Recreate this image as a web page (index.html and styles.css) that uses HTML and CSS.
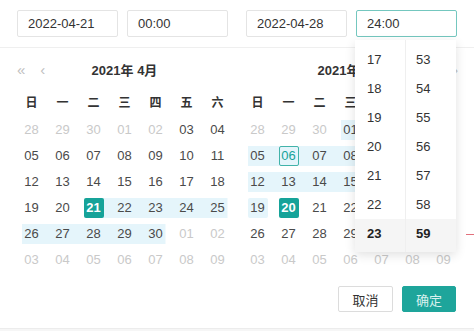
FILE: index.html
```html
<!DOCTYPE html>
<html lang="zh-CN">
<head>
    <meta charset="UTF-8">
    <meta name="viewport" content="width=device-width, initial-scale=1.0">
    <title>日期时间范围选择</title>
    <link rel="stylesheet" href="styles.css">
</head>
<body>

    <div class="picker">
        <div class="inputs">
            <div class="group">
                <div class="field">2022-04-21</div>
                <div class="field">00:00</div>
            </div>
            <div class="group">
                <div class="field">2022-04-28</div>
                <div class="field active">24:00</div>
            </div>
        </div>

        <div class="panels">
            <!-- left month -->
            <div class="panel">
                <div class="head">
                    <div class="arrows"><span>&laquo;</span><span>&lsaquo;</span></div>
                    <div class="title">2021年 4月</div>
                    <div></div>
                </div>
                <div class="grid">
                    <div class="wk">日</div><div class="wk">一</div><div class="wk">二</div><div class="wk">三</div><div class="wk">四</div><div class="wk">五</div><div class="wk">六</div>

                    <div class="d g"><span>28</span></div><div class="d g"><span>29</span></div><div class="d g"><span>30</span></div><div class="d g"><span>01</span></div><div class="d g"><span>02</span></div><div class="d"><span>03</span></div><div class="d"><span>04</span></div>

                    <div class="d"><span>05</span></div><div class="d"><span>06</span></div><div class="d"><span>07</span></div><div class="d"><span>08</span></div><div class="d"><span>09</span></div><div class="d"><span>10</span></div><div class="d"><span>11</span></div>

                    <div class="d"><span>12</span></div><div class="d"><span>13</span></div><div class="d"><span>14</span></div><div class="d"><span>15</span></div><div class="d"><span>16</span></div><div class="d"><span>17</span></div><div class="d"><span>18</span></div>

                    <div class="d"><span>19</span></div><div class="d"><span>20</span></div><div class="d s ss"><span>21</span></div><div class="d r"><span>22</span></div><div class="d r"><span>23</span></div><div class="d r"><span>24</span></div><div class="d r re"><span>25</span></div>

                    <div class="d r rs"><span>26</span></div><div class="d r"><span>27</span></div><div class="d r"><span>28</span></div><div class="d r"><span>29</span></div><div class="d r re"><span>30</span></div><div class="d g"><span>01</span></div><div class="d g"><span>02</span></div>

                    <div class="d g"><span>03</span></div><div class="d g"><span>04</span></div><div class="d g"><span>05</span></div><div class="d g"><span>06</span></div><div class="d g"><span>07</span></div><div class="d g"><span>08</span></div><div class="d g"><span>09</span></div>
                </div>
            </div>

            <!-- right month -->
            <div class="panel">
                <div class="head">
                    <div></div>
                    <div class="title">2021年 5月</div>
                    <div class="arrows right"><span>&rsaquo;</span><span>&raquo;</span></div>
                </div>
                <div class="grid">
                    <div class="wk">日</div><div class="wk">一</div><div class="wk">二</div><div class="wk">三</div><div class="wk">四</div><div class="wk">五</div><div class="wk">六</div>

                    <div class="d g"><span>28</span></div><div class="d g"><span>29</span></div><div class="d g"><span>30</span></div><div class="d r rs"><span>01</span></div><div class="d r"><span>02</span></div><div class="d r"><span>03</span></div><div class="d r re"><span>04</span></div>

                    <div class="d r rs"><span>05</span></div><div class="d r t"><span>06</span></div><div class="d r"><span>07</span></div><div class="d r"><span>08</span></div><div class="d r"><span>09</span></div><div class="d r"><span>10</span></div><div class="d r re"><span>11</span></div>

                    <div class="d r rs"><span>12</span></div><div class="d r"><span>13</span></div><div class="d r"><span>14</span></div><div class="d r"><span>15</span></div><div class="d r"><span>16</span></div><div class="d r"><span>17</span></div><div class="d r re"><span>18</span></div>

                    <div class="d h"><span>19</span></div><div class="d s"><span>20</span></div><div class="d"><span>21</span></div><div class="d"><span>22</span></div><div class="d"><span>23</span></div><div class="d"><span>24</span></div><div class="d"><span>25</span></div>

                    <div class="d"><span>26</span></div><div class="d"><span>27</span></div><div class="d"><span>28</span></div><div class="d"><span>29</span></div><div class="d"><span>30</span></div><div class="d"><span>31</span></div><div class="d g"><span>01</span></div>

                    <div class="d g"><span>03</span></div><div class="d g"><span>04</span></div><div class="d g"><span>05</span></div><div class="d g"><span>06</span></div><div class="d g"><span>07</span></div><div class="d g"><span>08</span></div><div class="d g"><span>09</span></div>
                </div>
            </div>
        </div>

        <div class="footer">
            <button class="btn">取消</button>
            <button class="btn ok">确定</button>
        </div>

        <!-- time dropdown for the end field -->
        <div class="time-drop">
            <ul class="col hours">
                <li>17</li><li>18</li><li>19</li><li>20</li><li>21</li><li>22</li><li class="on">23</li>
            </ul>
            <ul class="col mins">
                <li>53</li><li>54</li><li>55</li><li>56</li><li>57</li><li>58</li><li class="on">59</li>
            </ul>
        </div>

        <span class="marker"></span>
    </div>

</body>
</html>
```

FILE: styles.css
```css
body {
    margin: 0;
    padding: 0;
    background-color: #f6f6f6;
    font-family: "Liberation Sans", "Noto Sans CJK SC", sans-serif;
    color: #333;
}

.picker {
    position: relative;
    width: 474px;
    height: 328px;
    background-color: #fff;
    border-bottom: 1px solid #ececec;
    overflow: hidden;
}

/* top inputs */
.inputs {
    display: flex;
    gap: 18px;
    height: 37px;
    padding: 10px 0 0 17px;
    box-sizing: border-box;
    height: 48px;
    border-bottom: 1px solid #efefef;
}

.group {
    display: flex;
    gap: 9px;
}

.field {
    width: 101px;
    height: 27px;
    box-sizing: border-box;
    border: 1px solid #e4e4e4;
    border-radius: 2px;
    padding-left: 10px;
    font-size: 13px;
    line-height: 25px;
    color: #333;
}

.field.active {
    border-color: #74c7bf;
}

/* calendars */
.panels {
    display: flex;
    gap: 9px;
    padding-left: 16px;
}

.panel {
    width: 217px;
}

.head {
    display: grid;
    grid-template-columns: 1fr auto 1fr;
    align-items: center;
    height: 42px;
}

.arrows {
    display: flex;
    gap: 15px;
    padding-left: 1px;
    font-size: 15px;
    color: #c0c0c0;
}

.arrows.right {
    justify-content: flex-end;
    padding: 0 1px 0 0;
}

.title {
    font-size: 13px;
    font-weight: bold;
    color: #333;
}

.grid {
    display: grid;
    grid-template-columns: repeat(7, 31px);
}

.wk {
    height: 27px;
    line-height: 27px;
    text-align: center;
    font-size: 12px;
    font-weight: bold;
    color: #333;
}

.d {
    height: 26px;
    display: flex;
    align-items: center;
    justify-content: center;
    font-size: 13px;
    color: #4a4a4a;
}

.d span {
    width: 20px;
    height: 20px;
    line-height: 20px;
    text-align: center;
    border-radius: 2px;
    box-sizing: border-box;
}

.d.g {
    color: #c9c9c9;
}

.d.r {
    background: linear-gradient(#e5f5fb, #e5f5fb) center / 100% 20px no-repeat;
}

.d.r.rs {
    background-size: 25.5px 20px;
    background-position: right center;
}

.d.r.re {
    background-size: 25.5px 20px;
    background-position: left center;
}

.d.ss {
    background: linear-gradient(#e5f5fb, #e5f5fb) right center / 50% 20px no-repeat;
}

.d.s span {
    background-color: #16a399;
    color: #fff;
    font-weight: bold;
}

.d.t span {
    border: 1px solid #42b3aa;
    color: #16a399;
    line-height: 18px;
}

.d.h span {
    background-color: #e5f5fb;
}

/* footer */
.footer {
    display: flex;
    justify-content: flex-end;
    gap: 9px;
    padding: 13px 18px 0 0;
}

.btn {
    width: 55px;
    height: 26px;
    padding: 0;
    border: 1px solid #dcdcdc;
    border-radius: 2px;
    background-color: #fff;
    font-family: "Noto Sans CJK SC", sans-serif;
    font-size: 13px;
    color: #333;
}

.btn.ok {
    width: 54px;
    border-color: #1ea59b;
    background-color: #1ea59b;
    color: #d9f1ee;
}

/* time dropdown */
.time-drop {
    position: absolute;
    left: 355px;
    top: 40px;
    width: 101px;
    height: 212px;
    display: flex;
    background-color: #fff;
    box-shadow: 0 3px 10px rgba(0, 0, 0, 0.12);
}

.col {
    list-style: none;
    margin: 0;
    padding: 5px 0 0;
    width: 50px;
}

.col.hours {
    border-right: 1px solid #efefef;
}

.col li {
    height: 29px;
    line-height: 29px;
    font-size: 13px;
    color: #333;
}

.hours li {
    padding-left: 12px;
}

.mins li {
    padding-left: 10px;
}

.col li.on {
    height: 33px;
    line-height: 29px;
    font-weight: bold;
    color: #222;
    background-color: #f5f5f5;
}

.marker {
    position: absolute;
    left: 466px;
    top: 234px;
    width: 8px;
    height: 1px;
    background-color: #e2707c;
}
```
